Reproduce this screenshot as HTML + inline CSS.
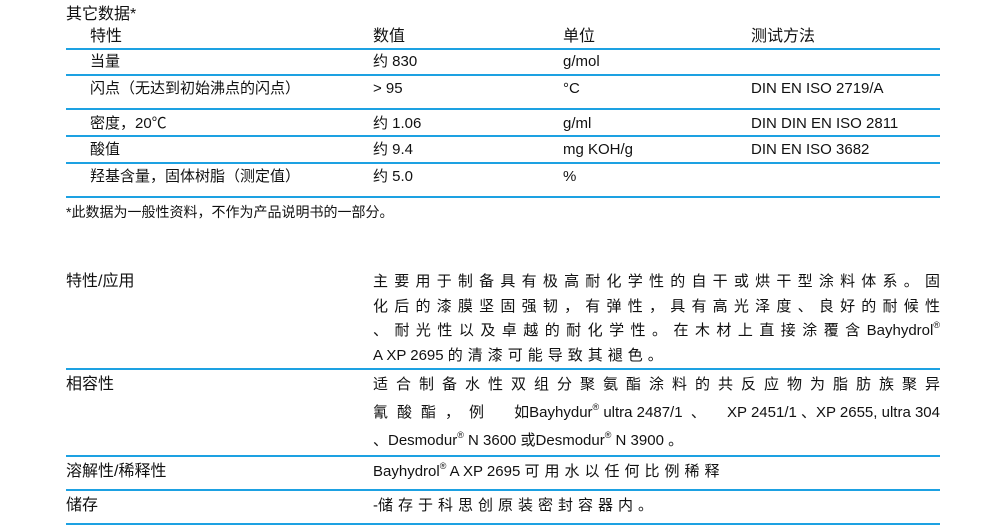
<!DOCTYPE html>
<html><head><meta charset="utf-8"><style>
body{margin:0;width:981px;height:531px;background:#fff;position:relative;overflow:hidden;font-family:"Liberation Sans","Noto Sans CJK SC",sans-serif;color:#111;font-size:15px}
.t{position:absolute;white-space:nowrap;line-height:18px}
.l{position:absolute;left:66px;width:874px;height:2px;background:#1da1e2}
.p{position:absolute;left:373px;width:567px;line-height:18px;white-space:nowrap}
.j{display:block;text-align:justify;text-align-last:justify;width:567px}
sup{font-size:9px;vertical-align:7px;line-height:0}
.s{letter-spacing:5px}
</style></head><body>
<div class="t" style="left:66px;top:6px;font-size:16px">其它数据*</div>
<div class="t" style="left:90px;top:28px;font-size:16px">特性</div>
<div class="t" style="left:373px;top:28px;font-size:16px">数值</div>
<div class="t" style="left:563px;top:28px;font-size:16px">单位</div>
<div class="t" style="left:751px;top:28px;font-size:16px">测试方法</div>
<div class="l" style="top:48px"></div>
<div class="t" style="left:90px;top:53px">当量</div><div class="t" style="left:373px;top:53px">约 830</div><div class="t" style="left:563px;top:53px">g/mol</div>
<div class="l" style="top:74px"></div>
<div class="t" style="left:90px;top:80px">闪点（无达到初始沸点的闪点）</div><div class="t" style="left:373px;top:80px">&gt; 95</div><div class="t" style="left:563px;top:80px">°C</div><div class="t" style="left:751px;top:80px">DIN EN ISO 2719/A</div>
<div class="l" style="top:108px"></div>
<div class="t" style="left:90px;top:115px">密度，20℃</div><div class="t" style="left:373px;top:115px">约 1.06</div><div class="t" style="left:563px;top:115px">g/ml</div><div class="t" style="left:751px;top:115px">DIN DIN EN ISO 2811</div>
<div class="l" style="top:135px"></div>
<div class="t" style="left:90px;top:141px">酸值</div><div class="t" style="left:373px;top:141px">约 9.4</div><div class="t" style="left:563px;top:141px">mg KOH/g</div><div class="t" style="left:751px;top:141px">DIN EN ISO 3682</div>
<div class="l" style="top:162px"></div>
<div class="t" style="left:90px;top:168px">羟基含量，固体树脂（测定值）</div><div class="t" style="left:373px;top:168px">约 5.0</div><div class="t" style="left:563px;top:168px">%</div>
<div class="l" style="top:196px"></div>
<div class="t" style="left:66px;top:203px;font-size:14px">*此数据为一般性资料，不作为产品说明书的一部分。</div>

<div class="t" style="left:66px;top:273px;font-size:16px">特性/应用</div>
<div class="p" style="top:273px"><span class="j" style="height:24.5px">主要用于制备具有极高耐化学性的自干或烘干型涂料体系。固</span><span class="j" style="height:24.5px">化后的漆膜坚固强韧，有弹性，具有高光泽度、良好的耐候性</span><span class="j" style="height:24.5px">、耐光性以及卓越的耐化学性。在木材上直接涂覆含Bayhydrol<sup>®</sup></span><span>A XP 2695 <span class="s">的清漆可能导致其褪色。</span></span></div>
<div class="l" style="top:368px"></div>
<div class="t" style="left:66px;top:376px;font-size:16px">相容性</div>
<div class="p" style="top:376px"><span class="j" style="height:28px">适合制备水性双组分聚氨酯涂料的共反应物为脂肪族聚异</span><span style="display:flex;justify-content:space-between;height:28px;width:567px"><span style="letter-spacing:9px">氰酸酯，例</span><span>如Bayhydur<sup>®</sup> ultra 2487/1&nbsp;&nbsp;、</span><span>XP 2451/1 、XP 2655, ultra 304</span></span><span>、Desmodur<sup>®</sup> N 3600 或Desmodur<sup>®</sup> N 3900 。</span></div>
<div class="l" style="top:455px"></div>
<div class="t" style="left:66px;top:463px;font-size:16px">溶解性/稀释性</div>
<div class="t" style="left:373px;top:463px">Bayhydrol<sup>®</sup> A XP 2695 <span class="s">可用水以任何比例稀释</span></div>
<div class="l" style="top:489px"></div>
<div class="t" style="left:66px;top:497px;font-size:16px">储存</div>
<div class="t" style="left:373px;top:497px">-<span class="s">储存于科思创原装密封容器内。</span></div>
<div class="l" style="top:523px"></div>
</body></html>
